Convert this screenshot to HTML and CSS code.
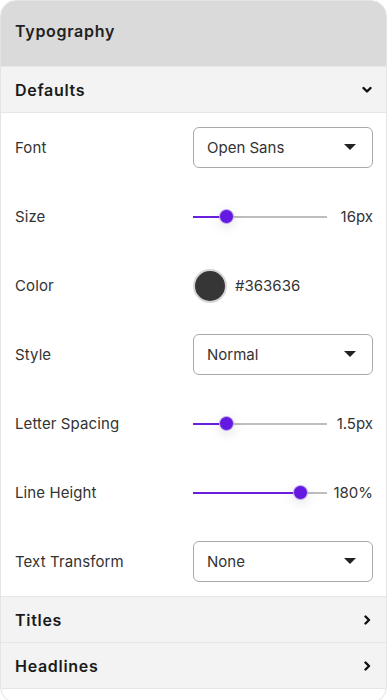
FILE: index.html
```html
<!DOCTYPE html>
<html>
<head>
<meta charset="utf-8">
<link rel="stylesheet" href="styles.css">
</head>
<body>
<div class="panel">
  <div class="title">Typography</div>

  <div class="section-head">
    <span>Defaults</span>
    <svg class="chev" width="10" height="10" viewBox="0 0 10 10"><polyline points="1.5,3 5,6.5 8.5,3" fill="none" stroke="#111" stroke-width="2.4" stroke-linecap="round" stroke-linejoin="round"/></svg>
  </div>

  <div class="section-body">
    <div class="row">
      <div class="label">Font</div>
      <div class="select"><span>Open Sans</span><span class="caret"></span></div>
    </div>
    <div class="row">
      <div class="label">Size</div>
      <div class="slider">
        <div class="track"><div class="fill" style="width:33px"></div><div class="thumb" style="left:33px"></div></div>
        <div class="val">16px</div>
      </div>
    </div>
    <div class="row">
      <div class="label">Color</div>
      <div class="color"><span class="swatch"></span><span class="hex">#363636</span></div>
    </div>
    <div class="row">
      <div class="label">Style</div>
      <div class="select"><span>Normal</span><span class="caret"></span></div>
    </div>
    <div class="row">
      <div class="label">Letter Spacing</div>
      <div class="slider">
        <div class="track"><div class="fill" style="width:33px"></div><div class="thumb" style="left:33px"></div></div>
        <div class="val">1.5px</div>
      </div>
    </div>
    <div class="row">
      <div class="label">Line Height</div>
      <div class="slider">
        <div class="track"><div class="fill" style="width:107px"></div><div class="thumb" style="left:107px"></div></div>
        <div class="val">180%</div>
      </div>
    </div>
    <div class="row">
      <div class="label">Text Transform</div>
      <div class="select"><span>None</span><span class="caret"></span></div>
    </div>
  </div>

  <div class="section-head">
    <span>Titles</span>
    <svg class="chev" width="10" height="10" viewBox="0 0 10 10"><polyline points="3.5,1.5 7,5 3.5,8.5" fill="none" stroke="#111" stroke-width="2.4" stroke-linecap="round" stroke-linejoin="round"/></svg>
  </div>
  <div class="section-head">
    <span>Headlines</span>
    <svg class="chev" width="10" height="10" viewBox="0 0 10 10"><polyline points="3.5,1.5 7,5 3.5,8.5" fill="none" stroke="#111" stroke-width="2.4" stroke-linecap="round" stroke-linejoin="round"/></svg>
  </div>
  <div class="tail"></div>
</div>
</body>
</html>
```
FILE: styles.css
```css
* { box-sizing: border-box; }
html, body { margin: 0; padding: 0; background: #fff; }
body {
  font-family: Inter, "Noto Sans", "Liberation Sans", sans-serif;
  color: #333;
  width: 387px;
  height: 700px;
  overflow: hidden;
}
.panel {
  width: 387px;
  border: 1px solid #e4e4e4;
  border-radius: 16px;
  overflow: hidden;
  background: #fff;
}
.title {
  height: 66px;
  background: #dadada;
  border-bottom: 1px solid #e8e8e8;
  display: flex;
  align-items: center;
  padding: 0 14px 6px;
  font-size: 16px;
  font-weight: 600;
  letter-spacing: 0.7px;
  color: #222;
}
.section-head {
  height: 46px;
  background: #f3f3f3;
  border-bottom: 1px solid #e6e6e6;
  display: flex;
  align-items: center;
  justify-content: space-between;
  padding: 0 14px 0 14px;
  font-size: 16px;
  font-weight: 600;
  letter-spacing: 0.7px;
  color: #1a1a1a;
}
.chev { display: block; }
.section-body {
  border-bottom: 1px solid #e6e6e6;
}
.row {
  height: 69px;
  display: flex;
  align-items: center;
  justify-content: space-between;
  padding: 0 13px 0 14px;
}
.label {
  font-size: 15px;
  color: #333;
  letter-spacing: 0.1px;
}
.select {
  width: 180px;
  height: 41px;
  border: 1px solid #a9a9a9;
  border-radius: 6px;
  display: flex;
  align-items: center;
  justify-content: space-between;
  padding: 0 16px 0 13px;
  font-size: 15px;
  color: #333;
}
.caret {
  width: 0;
  height: 0;
  border-left: 6px solid transparent;
  border-right: 6px solid transparent;
  border-top: 6px solid #222;
  margin-top: -2px;
}
.slider {
  width: 180px;
  display: flex;
  align-items: center;
  justify-content: space-between;
}
.track {
  position: relative;
  width: 134px;
  height: 2px;
  background: #bdbdbd;
}
.fill {
  height: 2px;
  background: #6a1fe0;
}
.thumb {
  position: absolute;
  top: 1px;
  width: 15px;
  height: 15px;
  margin: -7.5px 0 0 -7.5px;
  border-radius: 50%;
  background: #6319e0;
  border: 1.5px solid #c9b6f0;
  box-shadow: 0 3px 12px rgba(0,0,0,0.12);
}
.val {
  font-size: 15px;
  color: #333;
}
.color {
  width: 180px;
  display: flex;
  align-items: center;
  gap: 8px;
}
.swatch {
  width: 34px;
  height: 34px;
  border-radius: 50%;
  background: #363636;
  border: 2px solid #d6d6d6;
}
.hex {
  font-size: 15px;
  color: #333;
}
.tail { height: 13px; }
```
